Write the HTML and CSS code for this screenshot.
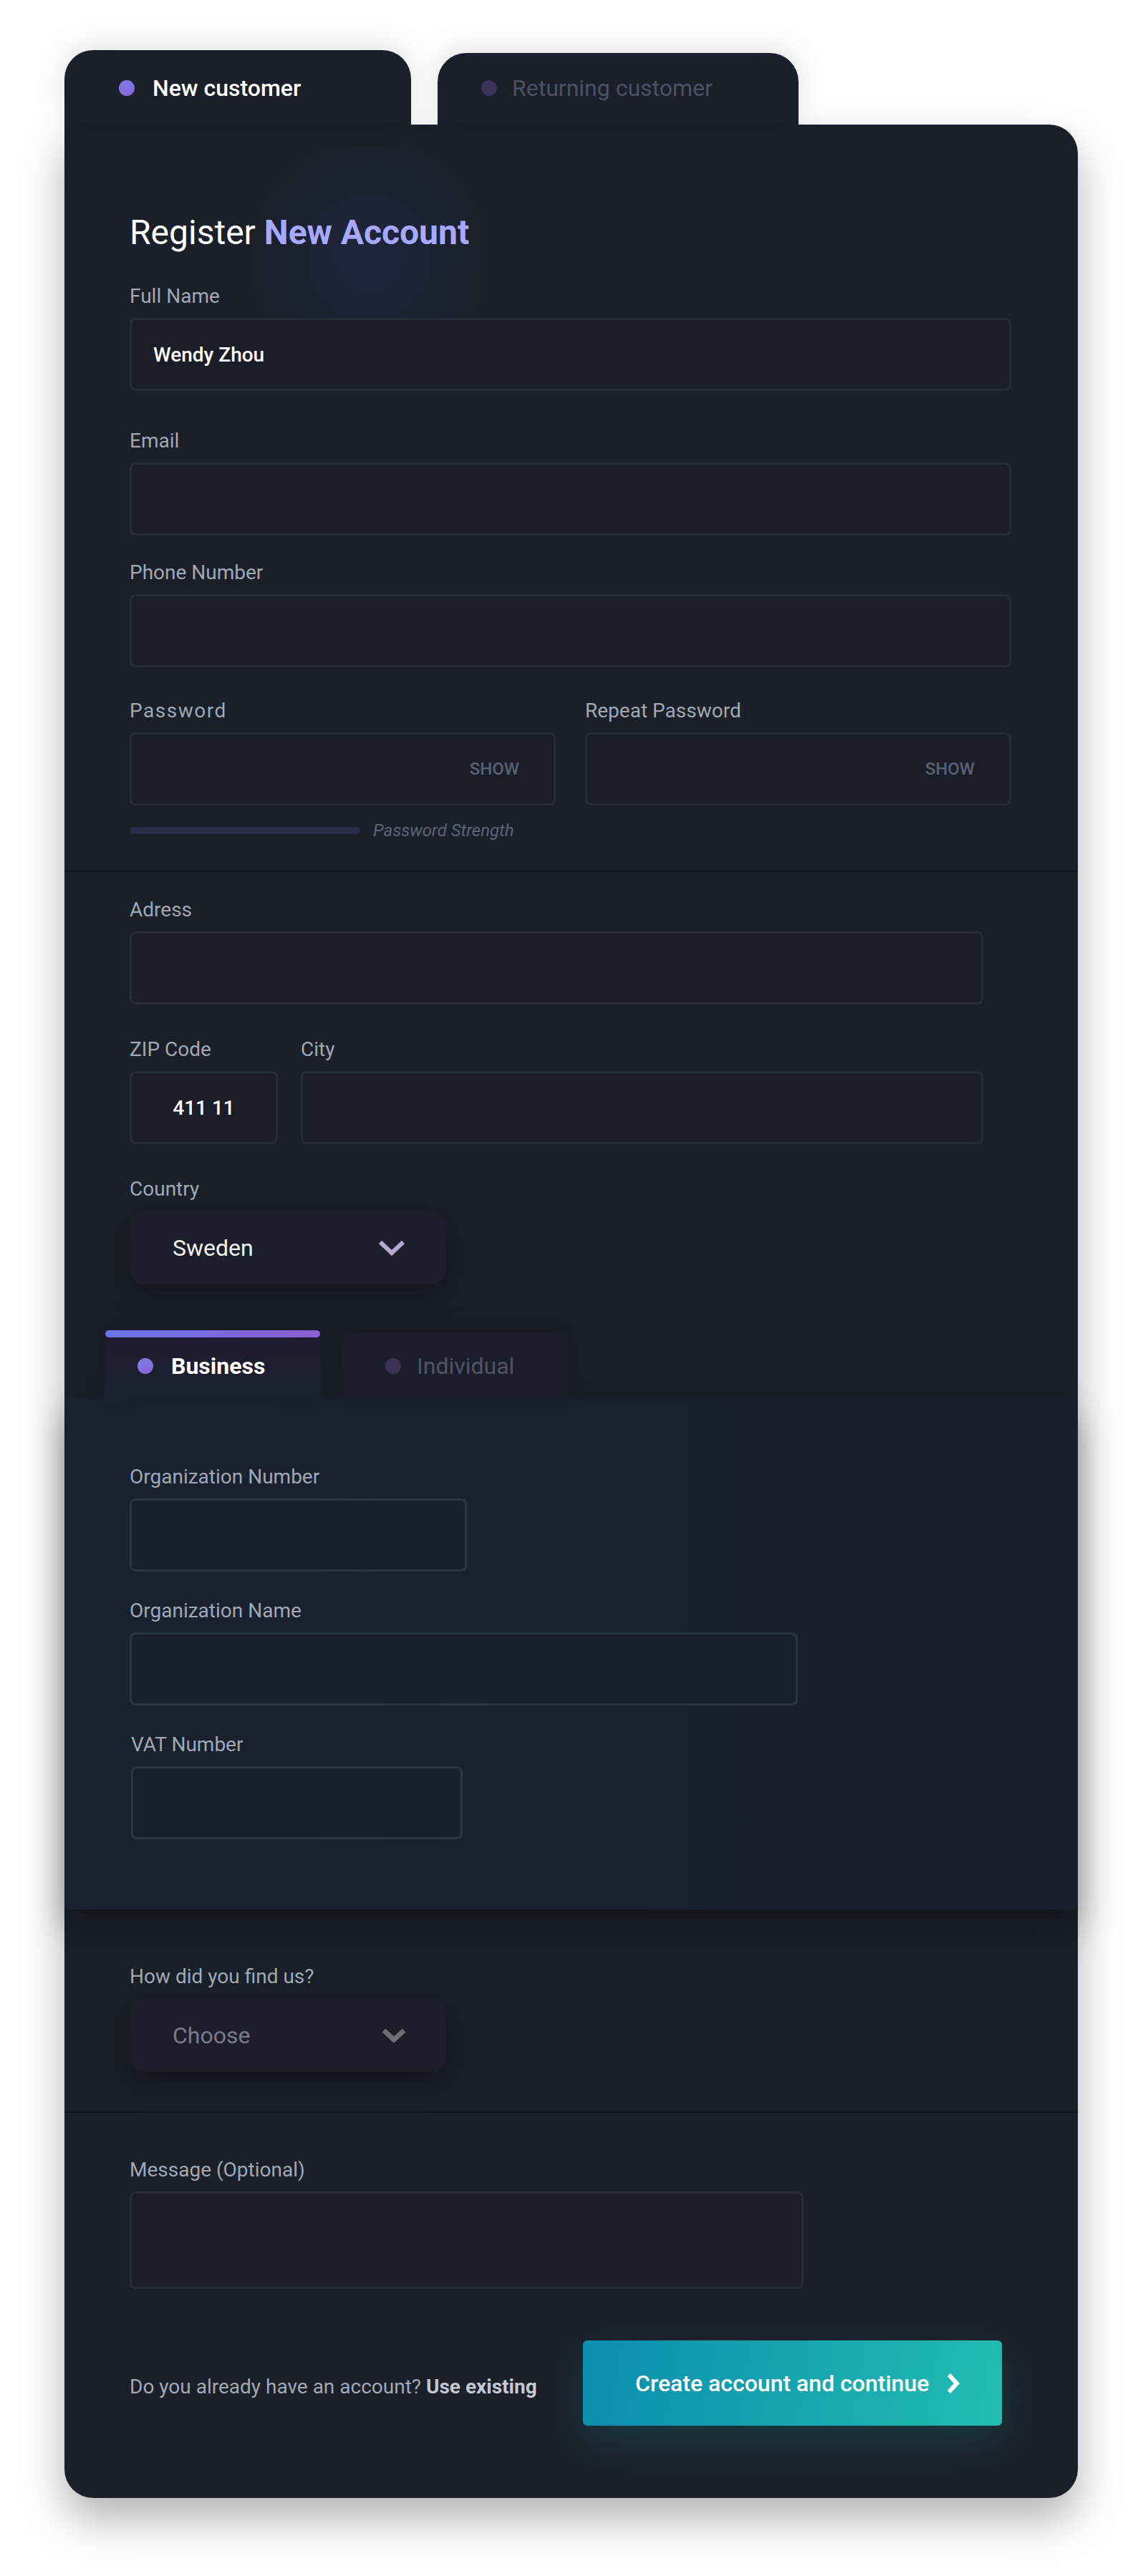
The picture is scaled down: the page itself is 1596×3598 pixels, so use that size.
FILE: index.html
```html
<!DOCTYPE html>
<html lang="en">
<head>
    <meta charset="UTF-8">
    <meta name="viewport" content="width=device-width, initial-scale=1.0">
    <title>Register New Account</title>
    <link rel="stylesheet" href="styles.css">
</head>
<body>
    <div class="register">
        <div class="customer-tabs">
            <div class="customer-tab active"><span class="dot"></span>New customer</div>
            <div class="customer-tab"><span class="dot"></span>Returning customer</div>
        </div>

        <div class="card">
            <section class="section section-account">
                <h1 class="title">Register <strong>New Account</strong></h1>

                <div class="field">
                    <label class="label">Full Name</label>
                    <div class="input">Wendy Zhou</div>
                </div>

                <div class="field field-email">
                    <label class="label">Email</label>
                    <div class="input"></div>
                </div>

                <div class="field">
                    <label class="label">Phone Number</label>
                    <div class="input"></div>
                </div>

                <div class="field-row">
                    <div class="field">
                        <label class="label label-spaced">Password</label>
                        <div class="input input-secret"><span class="show">SHOW</span></div>
                        <div class="strength">
                            <span class="strength-bar"></span>
                            <span class="strength-text">Password Strength</span>
                        </div>
                    </div>
                    <div class="field">
                        <label class="label">Repeat Password</label>
                        <div class="input input-secret"><span class="show">SHOW</span></div>
                    </div>
                </div>
            </section>

            <section class="section section-address">
                <div class="field field-address">
                    <label class="label">Adress</label>
                    <div class="input"></div>
                </div>

                <div class="zip-row">
                    <div class="field field-zip">
                        <label class="label">ZIP Code</label>
                        <div class="input input-center">411 11</div>
                    </div>
                    <div class="field field-city">
                        <label class="label">City</label>
                        <div class="input"></div>
                    </div>
                </div>

                <div class="field">
                    <label class="label">Country</label>
                    <div class="select">
                        <span>Sweden</span>
                        <svg class="chevron" width="38" height="22" viewBox="0 0 38 22"><polyline points="3,3 19,18 35,3" fill="none" stroke="#b4a8d2" stroke-width="6"/></svg>
                    </div>
                </div>
            </section>

            <div class="subtabs">
                <div class="subtab active">
                    <div class="subtab-label"><span class="dot"></span>Business</div>
                </div>
                <div class="subtab">
                    <div class="subtab-label"><span class="dot"></span>Individual</div>
                </div>
            </div>

            <div class="panel">
                <div class="field field-org-number">
                    <label class="label">Organization Number</label>
                    <div class="input"></div>
                </div>
                <div class="field field-org-name">
                    <label class="label">Organization Name</label>
                    <div class="input"></div>
                </div>
                <div class="field field-vat">
                    <label class="label">VAT Number</label>
                    <div class="input"></div>
                </div>
            </div>

            <section class="section section-find">
                <div class="field">
                    <label class="label">How did you find us?</label>
                    <div class="select select-empty">
                        <span>Choose</span>
                        <svg class="chevron" width="34" height="20" viewBox="0 0 34 20"><polyline points="3,3 17,16 31,3" fill="none" stroke="#6e6e73" stroke-width="7"/></svg>
                    </div>
                </div>
            </section>

            <section class="section section-message">
                <div class="field field-message">
                    <label class="label">Message (Optional)</label>
                    <div class="input textarea"></div>
                </div>

                <div class="footer">
                    <p class="existing">Do you already have an account? <strong>Use existing</strong></p>
                    <button class="submit">
                        Create account and continue
                        <svg width="20" height="30" viewBox="0 0 20 30"><polyline points="4,3 15,15 4,27" fill="none" stroke="#fff" stroke-width="6"/></svg>
                    </button>
                </div>
            </section>
        </div>
    </div>
</body>
</html>
```

FILE: styles.css
```css
body {
    margin: 0;
    background-color: #fff;
    font-family: Roboto, "Noto Sans", sans-serif;
}

.register {
    width: 1415px;
    margin: 70px 0 0 90px;
    padding-bottom: 110px;
}

/* Customer type tabs above the card */
.customer-tabs {
    display: flex;
    align-items: flex-end;
    gap: 37px;
}

.customer-tab {
    display: flex;
    align-items: flex-start;
    gap: 21px;
    box-sizing: border-box;
    width: 504px;
    height: 100px;
    padding: 30px 0 0 61px;
    background-color: #1b1f29;
    border-radius: 40px 40px 0 0;
    box-shadow: 0 -6px 40px rgba(0, 0, 0, 0.12);
    color: #4d5164;
    font-size: 32px;
    line-height: 38px;
}

.customer-tab.active {
    width: 484px;
    height: 104px;
    padding: 34px 0 0 76px;
    gap: 25px;
    color: #fff;
    font-weight: 500;
}

.dot {
    flex-shrink: 0;
    width: 22px;
    height: 22px;
    margin-top: 8px;
    border-radius: 50%;
    background-color: #3a3257;
}

.active .dot {
    background: linear-gradient(160deg, #7f7de8, #8765d8);
}

/* Card */
.card {
    background-color: #1b1f29;
    border-radius: 0 40px 40px 40px;
    box-shadow: 0 30px 60px rgba(0, 0, 0, 0.3);
}

.section {
    display: flex;
    flex-direction: column;
    padding: 0 93px 0 91px;
}

.section-account {
    gap: 44px;
    padding-top: 123px;
    padding-bottom: 42px;
    border-bottom: 2px solid #12151b;
    background: radial-gradient(circle 170px at 426px 185px, rgba(32, 44, 82, 0.5), rgba(32, 44, 82, 0));
}

.title {
    margin: 0;
    color: #fff;
    font-size: 48px;
    line-height: 56px;
    font-weight: 400;
}

.title strong {
    color: #a9a8ff;
    font-weight: 700;
}

.field {
    display: flex;
    flex-direction: column;
}

.field-email {
    margin: 9px 0 -9px;
}

.label {
    margin-bottom: 13px;
    color: #a0a8b5;
    font-size: 28px;
    line-height: 34px;
}

.label-spaced {
    letter-spacing: 1.5px;
}

.input {
    display: flex;
    align-items: center;
    box-sizing: border-box;
    height: 102px;
    padding: 0 30px;
    border: 3px solid #262c38;
    border-radius: 8px;
    background-color: #1b1e28;
    color: #fff;
    font-size: 28px;
    font-weight: 500;
}

.input-secret {
    justify-content: flex-end;
    padding-right: 48px;
}

.input-center {
    justify-content: center;
}

.show {
    color: #596174;
    font-size: 24px;
    font-weight: 500;
}

.field-row {
    display: grid;
    grid-template-columns: 1fr 1fr;
    gap: 41px;
}

.strength {
    display: flex;
    align-items: center;
    gap: 18px;
    margin-top: 21px;
    height: 28px;
}

.strength-bar {
    width: 322px;
    height: 10px;
    border-radius: 5px;
    background-color: #2c2b45;
}

.strength-text {
    color: #5d6477;
    font-size: 24px;
    font-style: italic;
}

/* Address */
.section-address {
    gap: 46px;
    padding-top: 36px;
    padding-bottom: 64px;
}

.field-address {
    width: 1192px;
}

.zip-row {
    display: flex;
    gap: 32px;
    width: 1192px;
}

.field-zip {
    width: 207px;
}

.field-city {
    flex: 1;
}

.select {
    display: flex;
    align-items: center;
    justify-content: space-between;
    box-sizing: border-box;
    width: 442px;
    height: 103px;
    padding: 0 57px 0 60px;
    border-radius: 20px;
    background-color: #1c1f2b;
    box-shadow: 0 14px 34px rgba(0, 0, 0, 0.35);
    color: #f2f2f4;
    font-size: 32px;
}

.select-empty {
    padding-right: 56px;
    color: #7b7a91;
}

/* Business / Individual tabs */
.subtabs {
    display: flex;
    align-items: flex-end;
    gap: 30px;
    padding-left: 56px;
}

.subtab {
    box-sizing: border-box;
    width: 315px;
    height: 92px;
    padding: 28px 0 0 60px;
    background-color: #1b1e2a;
    border-radius: 4px 4px 0 0;
    box-shadow: 0 -10px 30px rgba(0, 0, 0, 0.15);
}

.subtab.active {
    display: flex;
    flex-direction: column;
    width: 302px;
    height: 95px;
    padding: 0;
    border-radius: 5px 5px 0 0;
    background: linear-gradient(180deg, #1e1b30, #1a2130);
}

.subtab.active::before {
    content: "";
    display: block;
    height: 10px;
    margin: 0 1px;
    border-radius: 5px;
    background: linear-gradient(90deg, #6a74ec, #8a5fd2);
}

.subtab-label {
    display: flex;
    align-items: flex-start;
    gap: 22px;
    color: #4f5467;
    font-size: 32px;
    line-height: 38px;
}

.subtab-label .dot {
    margin-top: 8px;
}

.active .subtab-label {
    gap: 25px;
    padding: 21px 0 0 46px;
    color: #fff;
    font-weight: 700;
}

.panel {
    display: flex;
    flex-direction: column;
    gap: 38px;
    padding: 93px 93px 98px 91px;
    border-radius: 0 0 8px 8px;
    background: linear-gradient(90deg, #19212f, #1b1e2b);
    box-shadow: 0 24px 50px rgba(0, 0, 0, 0.35);
}

.panel .input {
    border-color: #2b3441;
    background-color: #19202c;
}

.field-org-number {
    width: 471px;
}

.field-org-name {
    width: 933px;
}

.field-vat {
    width: 463px;
    margin-left: 2px;
}

/* Lower sections */
.section-find {
    padding-top: 77px;
    padding-bottom: 55px;
    border-bottom: 2px solid #101318;
}

.section-message {
    padding-top: 63px;
    padding-bottom: 101px;
}

.field-message {
    width: 941px;
}

.textarea {
    height: 136px;
}

.footer {
    display: flex;
    align-items: center;
    margin-top: 72px;
}

.existing {
    margin: 10px 0 0;
    color: #a3a8b6;
    font-size: 28px;
}

.existing strong {
    color: #c4c8d2;
    font-weight: 700;
}

.submit {
    display: flex;
    align-items: center;
    gap: 24px;
    box-sizing: border-box;
    width: 585px;
    height: 119px;
    margin: 0 13px 0 auto;
    padding: 0 0 0 73px;
    border: none;
    border-radius: 6px;
    background: linear-gradient(100deg, #0a8daf, #22bdb0);
    box-shadow: 0 22px 60px rgba(20, 170, 170, 0.2);
    color: #fff;
    font-family: inherit;
    font-size: 32px;
    font-weight: 500;
}
```
